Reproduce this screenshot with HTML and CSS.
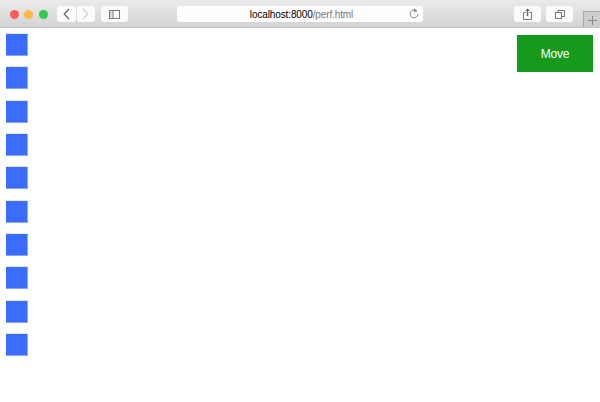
FILE: index.html
```html
<!DOCTYPE html>
<html lang="en">
<head>
<meta charset="utf-8">
<title>perf</title>
<link rel="stylesheet" href="styles.css">
</head>
<body>
<header class="toolbar">
  <div class="lights">
    <span class="light red"></span><span class="light yellow"></span><span class="light green"></span>
  </div>
  <div class="nav">
    <span class="tb-btn nav-btn"><svg width="7" height="12" viewBox="0 0 7 12"><path d="M6 1 1.200 6 6 11" fill="none" stroke="#666" stroke-width="1.200"/></svg></span>
    <span class="tb-btn nav-btn"><svg width="7" height="12" viewBox="0 0 7 12"><path d="M1 1l4.800 5L1 11" fill="none" stroke="#d4d4d4" stroke-width="1.200"/></svg></span>
  </div>
  <span class="tb-btn sidebar-btn"><svg width="11" height="9" viewBox="0 0 11 9"><rect x=".5" y=".5" width="10" height="8" fill="none" stroke="#777"/><path d="M4 .5v8" stroke="#777"/><path d="M1 2.300h2.500M1 4.200h2.500M1 6.100h2.500" stroke="#b5b5b5"/></svg></span>
  <div class="address">
    <span class="url"><span class="host">localhost:8000</span><span class="path">/perf.html</span></span>
    <svg class="reload" width="10" height="11" viewBox="0 0 10 11"><path d="M7.800 3.200A3.900 3.900 0 1 0 8.900 6" fill="none" stroke="#777" stroke-width=".9"/><path d="M5 .4l3.200 2.500L5 4z" fill="#777"/></svg>
  </div>
  <span class="tb-btn action-btn"><svg width="9" height="12" viewBox="0 0 9 12"><path d="M2.700 4.500H.5v7h8v-7H6.300" fill="none" stroke="#777"/><path d="M4.500 1.500v6.500" stroke="#666" stroke-width="1.400"/><path d="M2.200 3 4.500 .4 6.800 3z" fill="#666"/></svg></span>
  <span class="tb-btn action-btn tabs-btn"><svg width="10" height="9" viewBox="0 0 10 9"><rect x=".5" y="2.500" width="6" height="6" fill="none" stroke="#777"/><path d="M3 2.500V.5h6.500v6h-3" fill="none" stroke="#777"/></svg></span>
  <span class="new-tab"><svg width="9" height="9" viewBox="0 0 9 9"><path d="M4.500 0v9M0 4.500h9" stroke="#8c8c8c"/></svg></span>
</header>
<main class="page">
  <div class="squares">
    <div class="square"></div><div class="square"></div><div class="square"></div><div class="square"></div><div class="square"></div>
    <div class="square"></div><div class="square"></div><div class="square"></div><div class="square"></div><div class="square"></div>
  </div>
  <button class="move" type="button">Move</button>
</main>
</body>
</html>
```
FILE: styles.css
```css
* { box-sizing: border-box; }
html, body { margin: 0; height: 100%; background: #fff; overflow: hidden; }
body { font-family: "Liberation Sans", Arial, sans-serif; }

.toolbar {
  height: 28px;
  display: flex;
  align-items: flex-start;
  padding: 6px 0 0 9.500px;
  background: linear-gradient(#ebebeb, #d3d3d3);
  border-bottom: 1px solid #c4c4c4;
}
.lights { display: flex; gap: 5.500px; margin-top: 3.500px; }
.light { width: 9px; height: 9px; border-radius: 50%; }
.red { background: #fc5b57; }
.yellow { background: #fdbb40; }
.green { background: #34c84a; }

.tb-btn {
  height: 16px;
  background: #fbfbfb;
  border-radius: 3px;
  display: flex;
  align-items: center;
  justify-content: center;
}
.nav { display: flex; gap: 1px; margin-left: 9.500px; }
.nav-btn { width: 18.500px; }
.sidebar-btn { width: 27px; margin-left: 6px; }

.address {
  position: relative;
  width: 246px;
  height: 16px;
  margin-left: 49px;
  background: #fefefe;
  border-radius: 3px;
  display: flex;
  align-items: center;
  justify-content: center;
  font-size: 10px;
  letter-spacing: -0.12px;
  line-height: 16px;
}
.url { padding: 1px 0 0 3px; }
.host { color: #000; }
.path { color: #777; }
.reload { position: absolute; right: 4px; top: 2px; }

.action-btn { width: 27px; margin-left: 91px; }
.tabs-btn { margin-left: 5px; }
.new-tab {
  width: 17px;
  height: 16px;
  margin: 5px 0 0 10px;
  padding-top: 1px;
  background: #cdcdcd;
  border: 1px solid #a8a8a8;
  border-width: 1px 0 0 1px;
  display: flex;
  align-items: center;
  justify-content: center;
}

.page {
  display: flex;
  justify-content: space-between;
  align-items: flex-start;
  padding: 6px 7px 0 6px;
}
.squares { display: flex; flex-direction: column; gap: 11.330px; }
.square {
  width: 22px;
  height: 22px;
  background: #3a6dff;
  border: solid #86a5ff;
  border-width: 0 1px 1px 0;
  box-shadow: 0 -1px 0 #dfe8ff;
}
.move {
  width: 76px;
  height: 37px;
  margin-top: 1px;
  padding: 0;
  border: 0;
  background: #169a1c;
  color: #fff;
  font: 12px "Liberation Sans", Arial, sans-serif;
  letter-spacing: -0.2px;
}
```
